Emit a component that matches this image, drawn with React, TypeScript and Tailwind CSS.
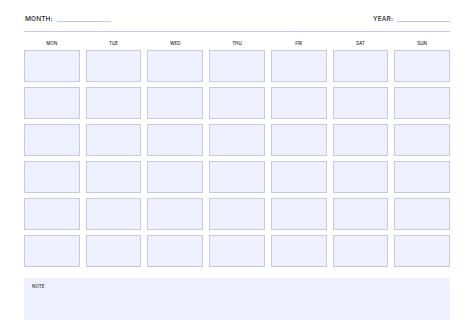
const DAYS = ["MON", "TUE", "WED", "THU", "FRI", "SAT", "SUN"];

export default function App() {
  const cells = Array.from({ length: 42 }, (_, i) => i);

  return (
    <div
      className="h-[335px] w-[474px] bg-white px-[24px] pt-[14px] text-[#1f1f2e]"
      style={{ fontFamily: "Inter, 'Noto Sans', sans-serif" }}
    >
      {/* Header */}
      <div className="flex h-[10px] items-center justify-between pl-px">
        <div className="flex items-center">
          <span className="text-[6.5px] font-medium leading-none tracking-[0.02em]">MONTH:</span>
          <span className="ml-[4px] mt-[4px] block h-px w-[54px] bg-[#c9cad8]" />
        </div>
        <div className="flex items-center">
          <span className="text-[6.5px] font-medium leading-none tracking-[0.02em]">YEAR:</span>
          <span className="ml-[4px] mt-[4px] block h-px w-[53px] bg-[#c9cad8]" />
        </div>
      </div>
      <div className="mt-[7px] h-px w-full bg-[#c3c9ee]" />

      {/* Day labels */}
      <div className="mt-[9px] grid grid-cols-7 gap-x-[6px]">
        {DAYS.map((d) => (
          <div key={d} className="text-center text-[4.5px] font-medium leading-[6px] text-[#2a2a38]">
            {d}
          </div>
        ))}
      </div>

      {/* Grid */}
      <div className="mt-[3px] grid grid-cols-7 gap-x-[6px] gap-y-[5px]">
        {cells.map((i) => (
          <div key={i} className="h-[32px] border border-[#c6c9e6] bg-[#eef0fd]" />
        ))}
      </div>

      {/* Note */}
      <div className="mt-[11px] h-[42px] w-full bg-[#eef0fd] px-[8px] pt-[6px]">
        <div className="text-[4.5px] font-medium leading-[6px] text-[#2a2a38]">NOTE</div>
      </div>
    </div>
  );
}
